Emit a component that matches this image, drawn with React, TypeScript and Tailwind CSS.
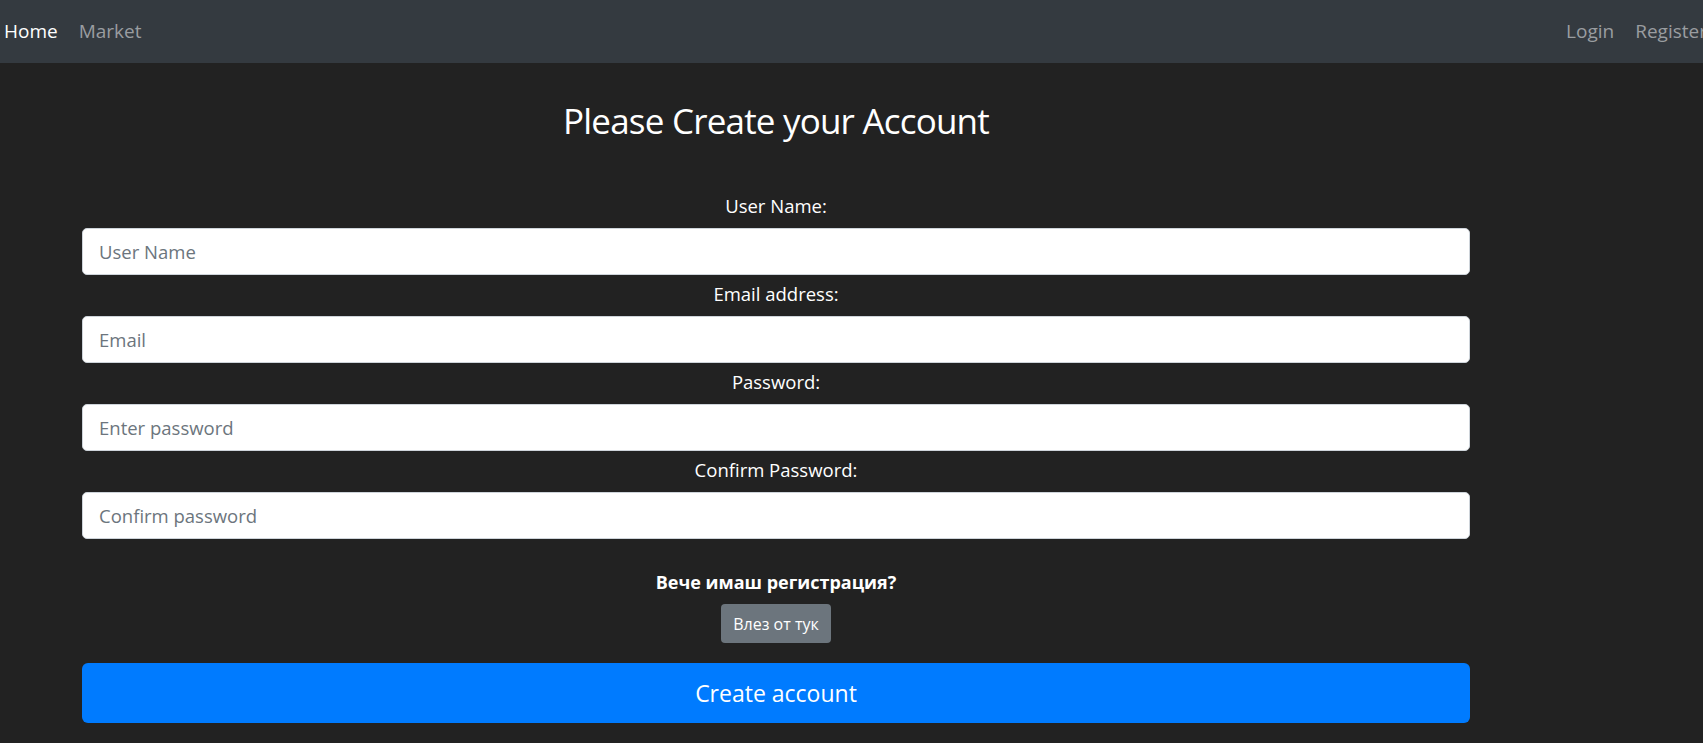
const font = "font-['Open_Sans','Noto_Sans',sans-serif]";

function Field({ label, placeholder, type = "text" }: { label: string; placeholder: string; type?: string }) {
  return (
    <div className="pt-[5px]">
      <label className="block text-center text-[18.5px] leading-[27px] text-white mb-[9px]">{label}</label>
      <input
        type={type}
        placeholder={placeholder}
        className="block h-[47px] w-full rounded-[5px] border border-[#ced4da] bg-white px-[16px] text-[18.5px] text-[#495057] placeholder:text-[#6c757d] outline-none"
      />
    </div>
  );
}

export default function App() {
  return (
    <div className={`min-h-[743px] bg-[#222222] ${font}`}>
      {/* Navbar */}
      <nav className="flex h-[63px] items-center justify-between overflow-hidden bg-[#343a40] text-[19px] whitespace-nowrap">
        <div className="flex items-center gap-[21px] pl-[4px]">
          <a className="text-white">Home</a>
          <a className="text-[#9a9da0]">Market</a>
        </div>
        <div className="-mr-[4px] flex items-center gap-[21px]">
          <a className="text-[#9a9da0]">Login</a>
          <a className="text-[#9a9da0]">Register</a>
        </div>
      </nav>

      {/* Form */}
      <div className="ml-[82px] w-[1388px]">
        <h2 className="mt-[36px] text-center text-[35px] leading-[43px] tracking-[-0.8px] text-white">
          Please Create your Account
        </h2>

        <form className="mt-[45px]">
          <Field label="User Name:" placeholder="User Name" />
          <Field label="Email address:" placeholder="Email" type="email" />
          <Field label="Password:" placeholder="Enter password" type="password" />
          <Field label="Confirm Password:" placeholder="Confirm password" type="password" />

          <div className="mt-[30px] flex flex-col items-center">
            <p className="text-[18px] font-bold leading-[27px] text-white">Вече имаш регистрация?</p>
            <button
              type="button"
              className="mt-[8px] h-[39px] rounded-[4px] bg-[#6c757d] px-[12px] text-[16px] text-white"
            >
              Влез от тук
            </button>
          </div>

          <button
            type="submit"
            className="mt-[20px] block h-[60px] w-full rounded-[6px] bg-[#007bff] text-[23px] text-white"
          >
            Create account
          </button>
        </form>
      </div>
    </div>
  );
}
